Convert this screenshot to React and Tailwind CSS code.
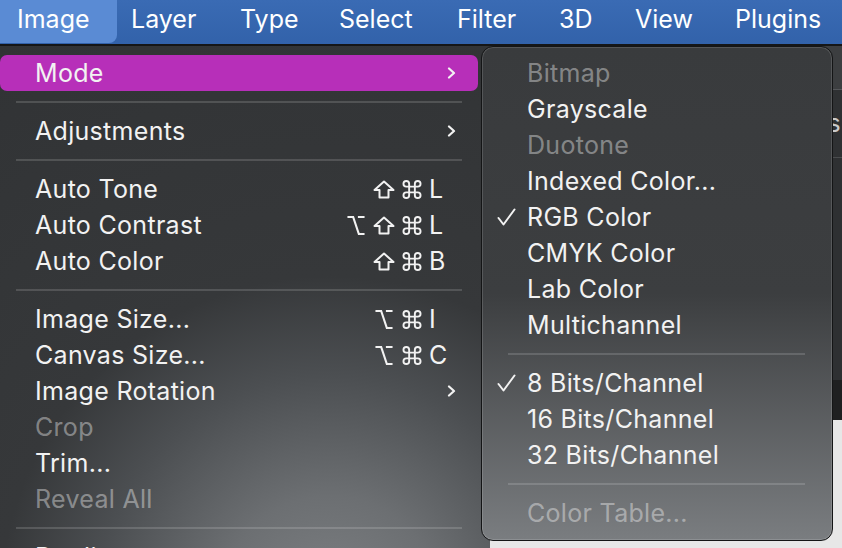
import React from "react";

const MENU_BAR = [
  { label: "Image", width: 117, active: true },
  { label: "Layer", width: 109 },
  { label: "Type", width: 99 },
  { label: "Select", width: 118 },
  { label: "Filter", width: 102 },
  { label: "3D", width: 76 },
  { label: "View", width: 100 },
  { label: "Plugins", width: 121 },
];

const IMAGE_MENU = [
  { label: "Mode", active: true, sub: true },
  "sep",
  { label: "Adjustments", sub: true },
  "sep",
  { label: "Auto Tone", mods: ["shift", "cmd"], key: "L" },
  { label: "Auto Contrast", mods: ["opt", "shift", "cmd"], key: "L" },
  { label: "Auto Color", mods: ["shift", "cmd"], key: "B" },
  "sep",
  { label: "Image Size...", mods: ["opt", "cmd"], key: "I" },
  { label: "Canvas Size...", mods: ["opt", "cmd"], key: "C" },
  { label: "Image Rotation", sub: true },
  { label: "Crop", disabled: true },
  { label: "Trim..." },
  { label: "Reveal All", disabled: true },
  "sep",
  { label: "Duplicate..." },
];

const MODE_MENU = [
  { label: "Bitmap", disabled: true },
  { label: "Grayscale" },
  { label: "Duotone", disabled: true },
  { label: "Indexed Color..." },
  { label: "RGB Color", checked: true },
  { label: "CMYK Color" },
  { label: "Lab Color" },
  { label: "Multichannel" },
  "sep",
  { label: "8 Bits/Channel", checked: true },
  { label: "16 Bits/Channel" },
  { label: "32 Bits/Channel" },
  "sep",
  { label: "Color Table...", disabled: true },
];

const ShiftKey = () => (
  <svg width="22" height="19" viewBox="0 0 22 19" fill="none">
    <polygon
      points="11,1.5 20.5,10 15.5,10 15.5,17.5 6.5,17.5 6.5,10 1.5,10"
      stroke="currentColor"
      strokeWidth="2"
      strokeLinejoin="round"
    />
  </svg>
);

const CmdKey = () => (
  <svg width="20" height="19" viewBox="2 2 20 20" fill="none">
    <path
      d="M15 6v12a3 3 0 1 0 3-3H6a3 3 0 1 0 3 3V6a3 3 0 1 0-3 3h12a3 3 0 1 0-3-3"
      stroke="currentColor"
      strokeWidth="2"
      strokeLinecap="round"
      strokeLinejoin="round"
    />
  </svg>
);

const OptKey = () => (
  <svg width="20" height="19" viewBox="2 2 20 20" fill="none">
    <path d="M3 3h6l6 18h6" stroke="currentColor" strokeWidth="2.2" />
    <path d="M14 3h7" stroke="currentColor" strokeWidth="2.2" />
  </svg>
);

const MOD_ICONS = { shift: ShiftKey, cmd: CmdKey, opt: OptKey };

const Chevron = () => (
  <svg width="9" height="12" viewBox="0 0 9 12" fill="none">
    <polyline
      points="2,1.5 7,6 2,10.5"
      stroke="currentColor"
      strokeWidth="2.2"
      strokeLinecap="round"
      strokeLinejoin="round"
    />
  </svg>
);

const Check = () => (
  <svg width="19" height="18" viewBox="0 0 19 18" fill="none">
    <polyline
      points="1.5,10 6.5,16.5 17.5,1.5"
      stroke="currentColor"
      strokeWidth="2"
      strokeLinecap="round"
      strokeLinejoin="round"
    />
  </svg>
);

const Separator = ({ className }) => (
  <div className="h-[22px] flex items-center">
    <div className={`h-[2px] flex-1 bg-white/15 ${className}`} />
  </div>
);

const MainRow = ({ item }) => {
  const { label, active, sub, disabled, mods, key } = item;
  return (
    <div
      className={`h-[36px] flex items-center pl-[35px] pr-[22px] rounded-[7px] ${
        active ? "bg-[#b72fb9]" : ""
      } ${disabled ? "text-white/40" : "text-[#f2f2f2]"}`}
    >
      <span className="flex-1">{label}</span>
      {sub && <Chevron />}
      {mods && (
        <div className="flex items-center tracking-normal">
          {mods.map((m) => {
            const Icon = MOD_ICONS[m];
            return (
              <span key={m} className="w-[28px] flex justify-center">
                <Icon />
              </span>
            );
          })}
          <span className="w-[30px] pl-[3px]">{key}</span>
        </div>
      )}
    </div>
  );
};

const SubRow = ({ item }) => {
  const { label, checked, disabled } = item;
  return (
    <div
      className={`h-[36px] flex items-center ${
        disabled ? "text-white/40" : "text-[#f2f2f2]"
      }`}
    >
      <span className="w-[45px] flex justify-end pr-[11px]">
        {checked && <Check />}
      </span>
      <span>{label}</span>
    </div>
  );
};

export default function App() {
  return (
    <div className="relative w-[842px] h-[548px] overflow-hidden bg-[#2e3032] font-['Inter','Noto_Sans',sans-serif] text-[25px] tracking-[0.3px] leading-none">
      {/* menu bar */}
      <div className="h-[44px] flex bg-[linear-gradient(#3a6bb4,#3262aa)] text-white tracking-normal">
        {MENU_BAR.map((m) => (
          <div
            key={m.label}
            style={{ width: m.width }}
            className={`h-[43px] flex items-center pb-[4px] ${
              m.active ? "pl-[17px] bg-[#5a8bd4] rounded-br-[8px]" : "pl-[14px]"
            }`}
          >
            {m.label}
          </div>
        ))}
      </div>
      <div className="h-[2px] bg-[#151617]" />

      <div className="flex h-[502px]">
        {/* image menu */}
        <div className="w-[490px] pr-[12px] pt-[9px] bg-[radial-gradient(circle_at_330px_560px,#7d8083_0px,#6c6f72_110px,#4c4f52_230px,#36383a_330px,#313335_100%)]">
          {IMAGE_MENU.map((item, i) =>
            item === "sep" ? (
              <Separator key={i} className="ml-[16px] mr-[16px]" />
            ) : (
              <MainRow key={item.label} item={item} />
            )
          )}
        </div>

        {/* application behind */}
        <div className="flex-1 flex flex-col">
          <div className="h-[44px] bg-[#3c3e40] border-b border-[#55575a]" />
          <div className="h-[68px] bg-[#2f3133] border-b border-[#4a4c4e] flex items-center justify-end text-[#c9cacb]">
            <span className="pr-[1px]">Layers</span>
          </div>
          <div className="h-[222px] bg-[#2e3032]" />
          <div className="h-[40px] bg-[#1f2021]" />
          <div className="flex-1 bg-[#e7e7e7]" />
        </div>
      </div>

      {/* mode submenu */}
      <div className="absolute left-[481px] top-[46px] w-[352px] h-[495px] rounded-[12px] border border-[#141516] shadow-[inset_0_0_0_1px_rgba(255,255,255,0.14)] bg-[linear-gradient(#393b3d_0%,#3c3e40_50%,#7a7d80_100%)] pt-[8px] pb-[9px]">
        {MODE_MENU.map((item, i) =>
          item === "sep" ? (
            <Separator key={i} className="ml-[26px] mr-[27px]" />
          ) : (
            <SubRow key={item.label} item={item} />
          )
        )}
      </div>
    </div>
  );
}
